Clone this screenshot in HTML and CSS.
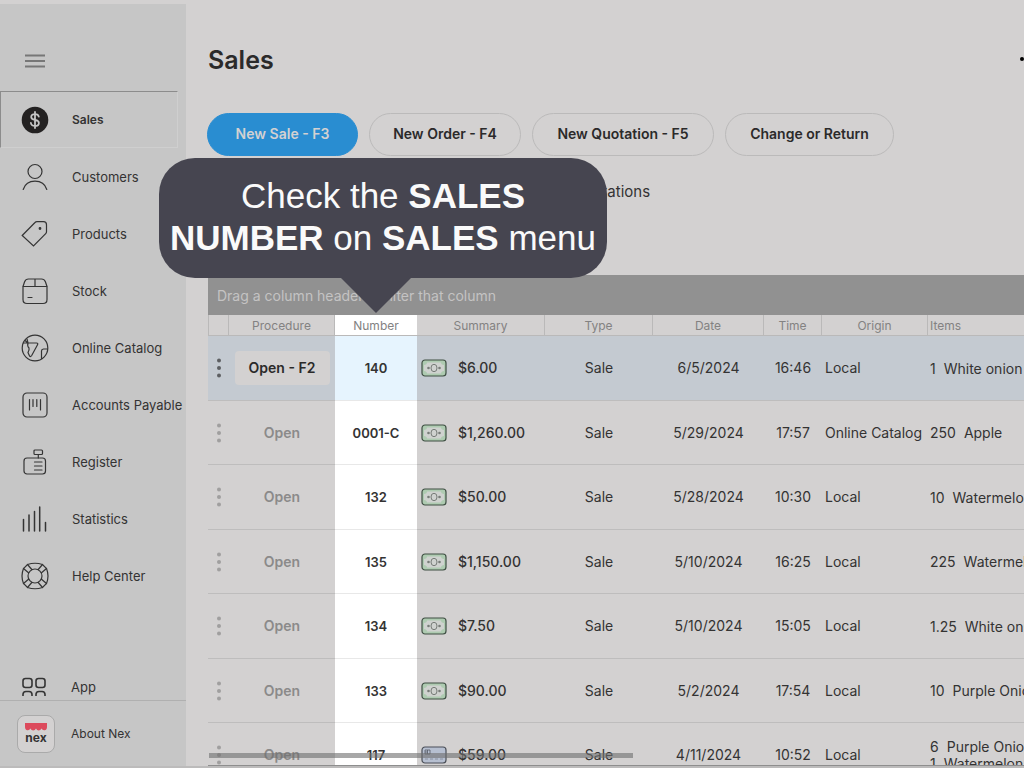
FILE: index.html
```html
<!DOCTYPE html>
<html lang="en">
<head>
<meta charset="utf-8">
<title>Sales</title>
<link rel="stylesheet" href="styles.css">
</head>
<body>
<svg class="defs" aria-hidden="true">
  <symbol id="cash" viewBox="0 0 26 18">
    <rect x="1" y="1" width="24" height="16" rx="3" fill="#aecbb1" stroke="#3f4f43" stroke-width="1.2"/>
    <path d="M6 3.5h14q0 2 3 2.500v6q-3 .5-3 2.500H6q0-2-3-2.500V6q3-.5 3-2.500z" fill="#cfd2cf"/>
    <ellipse cx="13" cy="9" rx="3" ry="3.700" fill="none" stroke="#777c78"/>
    <circle cx="7.500" cy="9" r="1.300" fill="#777c78"/><circle cx="18.500" cy="9" r="1.300" fill="#777c78"/>
  </symbol>
  <symbol id="card" viewBox="0 0 26 18">
    <rect x="1" y="1" width="24" height="16" rx="3" fill="#b6bfd0" stroke="#4a4f58" stroke-width="1.200"/>
    <path d="M4 4h5v4H4zM6.500 4v4M4 6h2.500" fill="none" stroke="#555b66" stroke-width=".8"/>
    <path d="M4 13h18" stroke="#8a92a2" stroke-dasharray="3 2"/>
  </symbol>
  <symbol id="dots" viewBox="0 0 6 20">
    <circle cx="3" cy="2.500" r="2"/><circle cx="3" cy="10" r="2"/><circle cx="3" cy="17.500" r="2"/>
  </symbol>
</svg>
<div class="app">
  <aside class="sidebar">
    <button class="menu-toggle" aria-label="Toggle menu"><svg width="22" height="14" viewBox="0 0 22 14" stroke="#777" stroke-width="1.800"><path d="M1 1.500h20M1 7h20M1 12.500h20"/></svg></button>
    <nav class="nav">
      <a class="nav-item active" href="#"><svg class="icon" viewBox="0 0 28 28"><circle cx="14" cy="14" r="13.300" fill="#242222" stroke="none"/><path d="M17.800 10.700c-.3-1.700-1.800-2.600-3.800-2.600-2.200 0-3.800 1.100-3.800 2.900 0 4.200 7.700 1.800 7.700 5.900 0 1.900-1.700 3-3.900 3s-3.900-1-4.100-2.900M14 6v16" stroke="#c6c6c6" stroke-width="1.800"/></svg>Sales</a>
      <a class="nav-item" href="#"><svg class="icon" viewBox="0 0 28 28"><circle cx="14" cy="8.500" r="7"/><path d="M2.200 26.500C3.800 21.500 8 18.200 14 18.200s10.200 3.300 11.800 8.300"/></svg>Customers</a>
      <a class="nav-item" href="#"><svg class="icon" viewBox="0 0 28 28"><path d="M1.200 15.500 14 2.500q.7-.8 2-.8h6.500q3 0 3 3v7q0 1.200-.8 2L12.500 26z"/><circle cx="19" cy="8.500" r=".8" fill="#343434"/></svg>Products</a>
      <a class="nav-item" href="#"><svg class="icon" viewBox="0 0 28 28"><path d="M2 9.500v13q0 4 4 4h16q4 0 4-4v-13M2 9.500l1.600-4.700Q4.700 2 7.500 2h13q2.800 0 3.900 2.800L26 9.500zM14 2v7.500M7 20.500h4"/></svg>Stock</a>
      <a class="nav-item" href="#"><svg class="icon" viewBox="0 0 28 28"><circle cx="14" cy="14" r="12.800"/><path d="M2.500 9h13q2 0 .9 2l-5.700 10.500q-1.500 2.200-2.500-.2L7 18.500q1.500-3 1-4.500C6 12 6.500 10.500 7 9L4 6.500M26.500 15h-4q-2 .3-2 2v7.500M7 9 6 5"/></svg>Online Catalog</a>
      <a class="nav-item" href="#"><svg class="icon" viewBox="0 0 28 28"><rect x="2" y="2" width="24" height="24" rx="4"/><path d="M8.500 8.500V19M12 8.500v7M15.800 8.500v7M19.500 8.500V19"/></svg>Accounts Payable</a>
      <a class="nav-item" href="#"><svg class="icon" viewBox="0 0 28 28"><rect x="3" y="10" width="21.500" height="16" rx="3"/><rect x="13" y="2" width="8.500" height="4.500" rx="1"/><path d="M17.300 6.500V10M13.500 14h7.500M13.500 18h7.500M13.500 22h7.500"/></svg>Register</a>
      <a class="nav-item" href="#"><svg class="icon" viewBox="0 0 28 28"><path d="M2.500 14.500V26M8 10v16M13.500 6.500V26M18.700 2v24M24.500 17.500V26" stroke-width="1.500"/></svg>Statistics</a>
      <a class="nav-item" href="#"><svg class="icon" viewBox="0 0 28 28"><circle cx="14" cy="14" r="7"/><path d="M6.500 2.500Q14 0 21.500 2.500l4 4q3 7.500 0 15l-4 4q-7.500 2.500-15 0l-4-4q-3-7.500 0-15z"/><path d="M6.500 2.500l4.300 5M2.500 6.500l5 4.300M21.500 2.500l-4.300 5M25.500 6.500l-5 4.300M6.500 25.500l4.300-5M2.500 21.500l5-4.300M21.500 25.500l-4.300-5M25.500 21.500l-5-4.300"/></svg>Help Center</a>
    </nav>
    <div class="sidebar-foot">
      <a class="nav-item app-link" href="#"><svg class="icon-app" width="28" height="20" viewBox="0 0 28 20"><rect x="2" y="1.500" width="9" height="9" rx="2.500"/><rect x="15" y="1.500" width="9" height="9" rx="2.500"/><path d="M2 19v-1.500q0-3 3-3h3q3 0 3 3V19M15 19v-1.500q0-3 3-3h3q3 0 3 3V19"/></svg>App</a>
      <a class="nav-item about" href="#"><span class="logo"><svg width="22" height="8" viewBox="0 0 22 8"><path d="M0 0h22v4q0 3-2.500 3.200-2 .3-3-1.700-1 2-2.800 2T11 5.500q-1 2-2.800 2T5.400 5.500q-1 2-2.900 1.700Q0 7 0 4z" fill="#dc4a5c"/></svg><b>nex</b></span>About Nex</a>
    </div>
  </aside>

  <main class="main">
    <header class="head">
      <h1>Sales</h1>
      <button class="more" aria-label="More options"><svg width="20" height="6" viewBox="0 0 20 6"><circle cx="3" cy="3" r="2"/><circle cx="10" cy="3" r="2"/><circle cx="17" cy="3" r="2"/></svg></button>
    </header>
    <div class="actions">
      <button class="pill primary">New Sale - F3</button>
      <button class="pill">New Order - F4</button>
      <button class="pill wide">New Quotation - F5</button>
      <button class="pill mid">Change or Return</button>
    </div>
    <div class="tabs"><button class="tab">Quotations</button></div>
    <section class="grid">
      <div class="group-bar">Drag a column header to filter that column</div>
      <table>
        <colgroup><col class="c-menu"><col class="c-proc"><col class="c-num"><col class="c-sum"><col class="c-type"><col class="c-date"><col class="c-time"><col class="c-orig"><col></colgroup>
        <thead><tr><th></th><th>Procedure</th><th class="num">Number</th><th>Summary</th><th>Type</th><th>Date</th><th>Time</th><th>Origin</th><th class="items">Items</th></tr></thead>
        <tbody>
          <tr class="selected"><td><button class="dots" aria-label="Row menu"><svg><use href="#dots"/></svg></button></td><td><button class="open">Open - F2</button></td><td class="num">140</td><td class="sum"><div><svg><use href="#cash"/></svg>$6.00</div></td><td>Sale</td><td>6/5/2024</td><td>16:46</td><td class="orig">Local</td><td class="items"><p><span>1</span>White onion</p></td></tr>
          <tr><td><button class="dots" aria-label="Row menu"><svg><use href="#dots"/></svg></button></td><td><button class="open">Open</button></td><td class="num">0001-C</td><td class="sum"><div><svg><use href="#cash"/></svg>$1,260.00</div></td><td>Sale</td><td>5/29/2024</td><td>17:57</td><td class="orig">Online Catalog</td><td class="items"><p><span>250</span>Apple</p></td></tr>
          <tr><td><button class="dots" aria-label="Row menu"><svg><use href="#dots"/></svg></button></td><td><button class="open">Open</button></td><td class="num">132</td><td class="sum"><div><svg><use href="#cash"/></svg>$50.00</div></td><td>Sale</td><td>5/28/2024</td><td>10:30</td><td class="orig">Local</td><td class="items"><p><span>10</span>Watermelon</p></td></tr>
          <tr><td><button class="dots" aria-label="Row menu"><svg><use href="#dots"/></svg></button></td><td><button class="open">Open</button></td><td class="num">135</td><td class="sum"><div><svg><use href="#cash"/></svg>$1,150.00</div></td><td>Sale</td><td>5/10/2024</td><td>16:25</td><td class="orig">Local</td><td class="items"><p><span>225</span>Watermelon</p></td></tr>
          <tr><td><button class="dots" aria-label="Row menu"><svg><use href="#dots"/></svg></button></td><td><button class="open">Open</button></td><td class="num">134</td><td class="sum"><div><svg><use href="#cash"/></svg>$7.50</div></td><td>Sale</td><td>5/10/2024</td><td>15:05</td><td class="orig">Local</td><td class="items"><p><span>1.25</span>White onion</p></td></tr>
          <tr><td><button class="dots" aria-label="Row menu"><svg><use href="#dots"/></svg></button></td><td><button class="open">Open</button></td><td class="num">133</td><td class="sum"><div><svg><use href="#cash"/></svg>$90.00</div></td><td>Sale</td><td>5/2/2024</td><td>17:54</td><td class="orig">Local</td><td class="items"><p><span>10</span>Purple Onion</p></td></tr>
          <tr><td><button class="dots" aria-label="Row menu"><svg><use href="#dots"/></svg></button></td><td><button class="open">Open</button></td><td class="num">117</td><td class="sum"><div><svg><use href="#card"/></svg>$59.00</div></td><td>Sale</td><td>4/11/2024</td><td>10:52</td><td class="orig">Local</td><td class="items"><p><span>6</span>Purple Onion</p><p><span>1</span>Watermelon</p></td></tr>
        </tbody>
      </table>
      <div class="scrollbar"></div>
    </section>
  </main>
  <div class="callout" role="note">Check the <b>SALES NUMBER</b> on <b>SALES</b> menu</div>
</div>
</body>
</html>
```
FILE: styles.css
```css
* { box-sizing: border-box; }
body {
  margin: 0;
  background: #d3d1d1;
  color: #343333;
  font: 14px/18px Inter, "Liberation Sans", sans-serif;
}
button { border: 0; padding: 0; background: none; font: inherit; color: inherit; }
svg { display: block; flex: none; }
.defs { position: absolute; width: 0; height: 0; }
.app {
  position: relative;
  display: flex;
  height: 100vh;
  padding-top: 4px;
  overflow: hidden;
  border-bottom: 2px solid #bcbbbb;
}
.sidebar {
  flex: 0 0 186px;
  display: flex;
  flex-direction: column;
  background: #c6c6c6;
}
.menu-toggle { align-self: flex-start; padding: 50px 24px 23px; }
.nav { display: flex; flex-direction: column; }
.nav-item {
  display: flex;
  align-items: center;
  gap: 23px;
  height: 57px;
  padding-left: 21px;
  color: #343333;
  font-size: 13px;
  text-decoration: none;
  white-space: nowrap;
}
.nav-item.active {
  margin-right: 8px;
  padding-left: 20px;
  border: 1px solid #cfcfcf;
  border-top-color: #8c8c8c;
  border-left-color: #8c8c8c;
  font-size: 12px;
  font-weight: 600;
}
.icon { width: 28px; height: 28px; }
.icon, .icon-app { fill: none; stroke: #343434; stroke-width: 1.2; stroke-linecap: round; }
.icon-app { stroke-width: 1.6; stroke-linecap: butt; }
.sidebar-foot { margin-top: auto; }
.app-link { height: 26px; gap: 22px; padding-bottom: 2px; border-bottom: 1px solid #b0b0b0; }
.about { height: 65px; padding-left: 17px; gap: 16px; font-size: 12px; }
.logo {
  display: flex;
  flex-direction: column;
  align-items: center;
  justify-content: center;
  width: 38px;
  height: 38px;
  border: 1px solid #aaa;
  border-radius: 8px;
  background: #d3d1d1;
}
.logo b { font-size: 12px; line-height: 14px; }
.main {
  flex: 1;
  min-width: 0;
  display: flex;
  flex-direction: column;
  padding-left: 22px;
  overflow: hidden;
}
.head {
  display: flex;
  align-items: center;
  justify-content: space-between;
  height: 109px;
  flex: none;
}
h1 { margin: 0; font-size: 25px; line-height: 32px; padding-top: 2px; font-weight: 600; color: #2b2a2a; }
.more { margin-right: -15px; }
.actions { display: flex; gap: 11px; flex: none; margin-left: -1px; }
.pill {
  height: 43px;
  min-width: 152px;
  padding: 0 12px 2px;
  border: 1px solid #bbbaba;
  border-radius: 22px;
  font-weight: 600;
  color: #2b2a2a;
}
.pill.wide { min-width: 182px; }
.pill.mid { min-width: 169px; }
.pill.primary { min-width: 151px; border-color: #298dd1; background: #298dd1; color: #d3d1d1; }
.tabs { flex: none; padding: 24px 0 0 365px; height: 119px; }
.tab { font-size: 15px; line-height: 24px; }
.grid { position: relative; flex: 1; min-height: 0; overflow: hidden; border-bottom: 1px solid #8e8e8e; }
.group-bar { height: 40px; padding: 0 9px; background: #919191; color: #c4c3c3; line-height: 41px; }
table { width: 100%; table-layout: fixed; border-collapse: separate; border-spacing: 0; }
.c-menu { width: 21px; }
.c-proc { width: 106px; }
.c-num { width: 82px; }
.c-sum { width: 128px; }
.c-type { width: 108px; }
.c-date { width: 111px; }
.c-time { width: 58px; }
.c-orig { width: 106px; }
th {
  height: 21px;
  padding: 2px 0 0;
  border-right: 1px solid #bab9b9;
  border-bottom: 1px solid #bab9b9;
  font-size: 12px;
  font-weight: 400;
  color: #838282;
}
th:first-child { border-left: 1px solid #bab9b9; }
td {
  height: 64px;
  padding: 0;
  border-bottom: 1px solid #bebdbd;
  text-align: center;
  white-space: nowrap;
  overflow: hidden;
}
tr:nth-child(odd) td { height: 65px; }
.selected td { background: #c4cad1; }
th.num, td.num { background: #fff; border-right: 0; }
td.num { font-size: 13px; font-weight: 600; border-bottom-color: #e8e8e8; }
.selected td.num { background: #e6f4fe; }
.dots { display: block; margin: 0 auto; }
.dots svg { width: 6px; height: 20px; fill: #a09f9f; }
.selected .dots svg { fill: #5d5f62; }
.open { font-weight: 600; color: #8b8a8a; }
.selected .open { width: 95px; height: 34px; border-radius: 4px; background: #d3d1d1; color: #2b2a2a; }
.sum div { display: flex; align-items: center; gap: 11px; padding-left: 4px; font-weight: 500; }
.sum svg { width: 26px; height: 18px; }
.orig { padding-left: 3px; text-align: left; }
.items { padding-left: 2px; border-right: 0; text-align: left; }
.items p { margin: 0; line-height: 17px; }
.items span { margin-right: 8px; }
.scrollbar { position: absolute; left: 1px; bottom: 7px; width: 52%; height: 5px; background: rgba(110, 110, 110, .6); }
.callout {
  position: absolute;
  left: 159px;
  top: 158px;
  width: 448px;
  padding: 17px 4px 19px;
  border-radius: 36px;
  background: #464550;
  color: #fafafa;
  font: 35px/42px "Liberation Sans", sans-serif;
  text-align: center;
}
.callout::after {
  content: "";
  position: absolute;
  left: 182px;
  top: 100%;
  border: 35px solid transparent;
  border-top-color: #464550;
  border-bottom: 0;
}
```
